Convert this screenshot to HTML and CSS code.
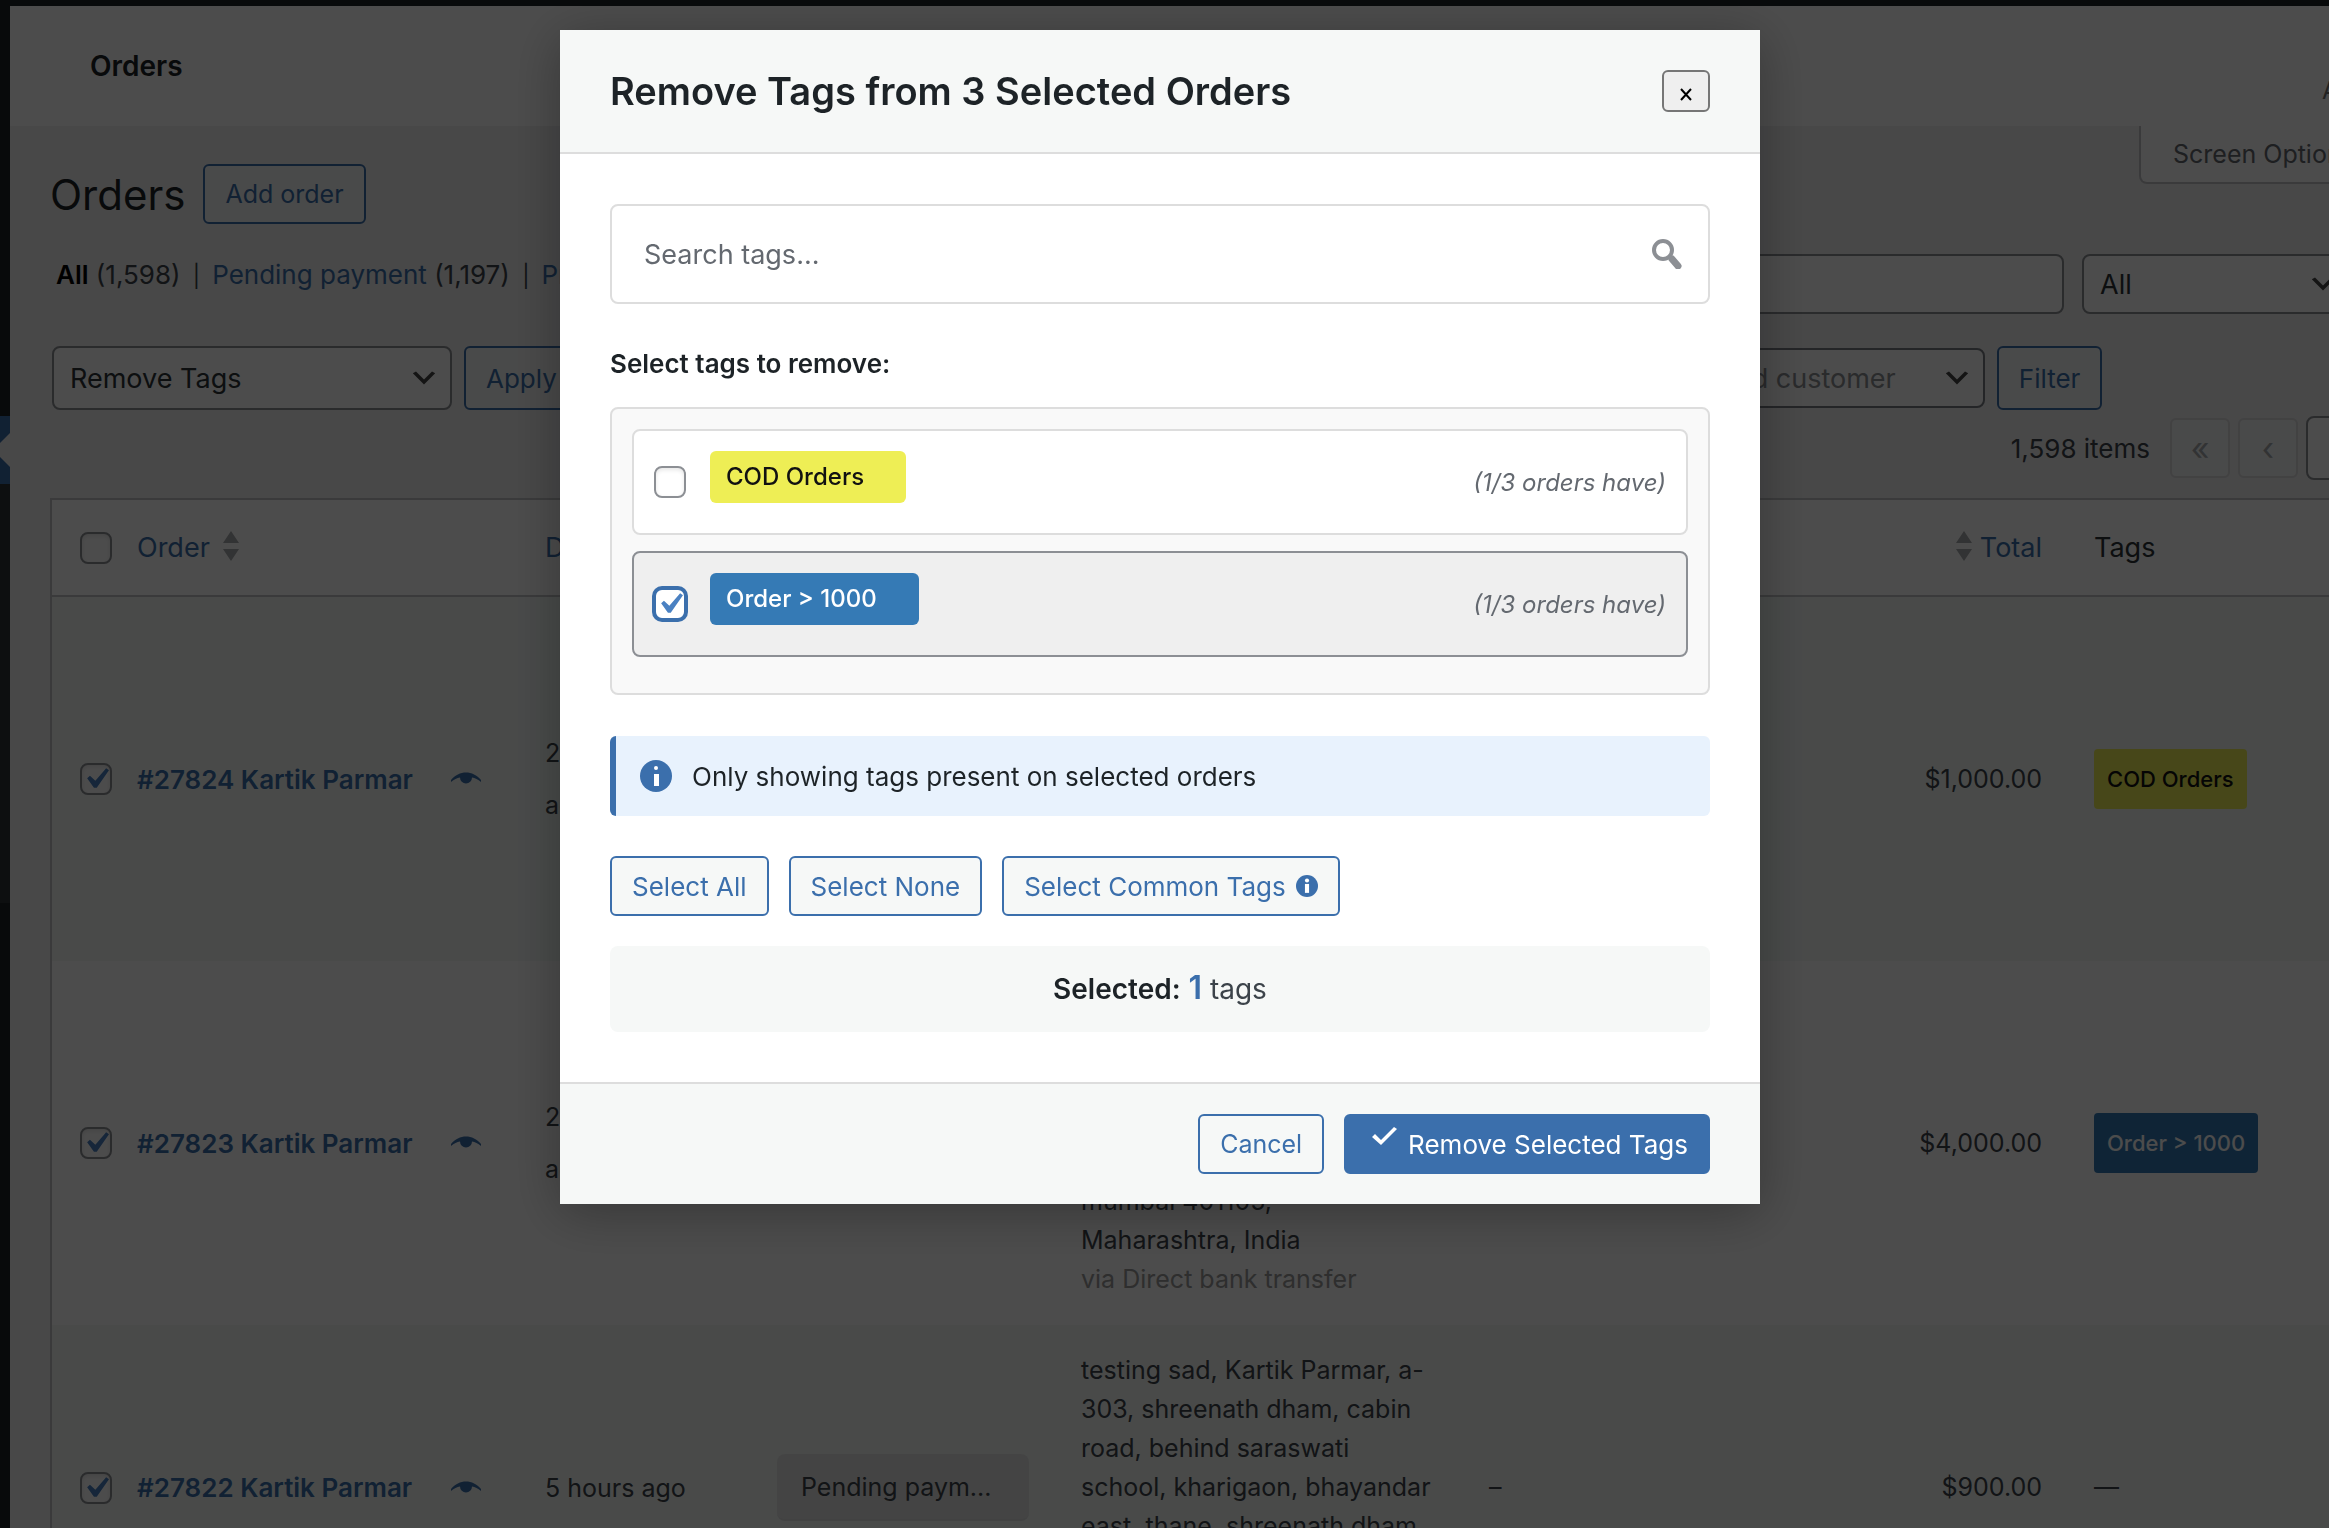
FILE: index.html
```html
<!DOCTYPE html>
<html lang="en">
<head>
    <meta charset="UTF-8">
    <meta name="viewport" content="width=device-width, initial-scale=1.0">
    <title>Orders</title>
    <link rel="stylesheet" href="styles.css">
</head>
<body>
    <div class="admin-bar"></div>
    <div class="admin">
        <nav class="admin-menu" aria-label="Main menu">
            <div class="menu-items"></div>
            <div class="menu-current"></div>
            <div class="menu-sub"></div>
            <div class="menu-items"></div>
        </nav>

        <main class="content">
            <header class="wc-header">
                <strong>Orders</strong>
                <a href="#" class="activity">Activity</a>
            </header>

            <div class="wrap">
                <button type="button" class="screen-options">Screen Options</button>

                <div class="title-row">
                    <h1>Orders</h1>
                    <button type="button" class="button">Add order</button>
                </div>

                <div class="search-row">
                    <ul class="views">
                        <li><a href="#" class="current">All</a> (1,598) <span class="sep">|</span></li>
                        <li><a href="#">Pending payment</a> (1,197) <span class="sep">|</span></li>
                        <li><a href="#">Processing</a> (266)</li>
                    </ul>
                    <div class="search-box">
                        <input type="search" aria-label="Search orders">
                        <select aria-label="Search in">
                            <option>All</option>
                        </select>
                    </div>
                </div>

                <div class="filter-row">
                    <select class="bulk" aria-label="Bulk actions">
                        <option>Remove Tags</option>
                    </select>
                    <button type="button" class="button tall">Apply</button>
                    <select class="dates" aria-label="Date">
                        <option>All dates</option>
                    </select>
                    <select class="dates" aria-label="Tag">
                        <option>All tags</option>
                    </select>
                    <select class="customer" aria-label="Customer">
                        <option>Filter by registered customer</option>
                    </select>
                    <button type="button" class="button tall">Filter</button>
                </div>

                <div class="pages">
                    <span class="count">1,598 items</span>
                    <button type="button" class="page-btn" disabled>«</button>
                    <button type="button" class="page-btn" disabled>‹</button>
                    <input type="text" aria-label="Current page">
                </div>

                <table class="orders">
                    <colgroup>
                        <col class="col-check">
                        <col class="col-order">
                        <col class="col-date">
                        <col class="col-status">
                        <col class="col-billing">
                        <col class="col-ship">
                        <col class="col-total">
                        <col>
                    </colgroup>
                    <thead>
                        <tr>
                            <th class="check"><input type="checkbox" aria-label="Select all"></th>
                            <th><a href="#">Order <svg class="sort after" viewBox="0 0 16 30"><path d="M8 0l8 12H0zM0 18h16L8 30z"/></svg></a></th>
                            <th><a href="#">Date</a></th>
                            <th>Status</th>
                            <th>Billing</th>
                            <th>Ship to</th>
                            <th class="total"><a href="#"><svg class="sort" viewBox="0 0 16 30"><path d="M8 0l8 12H0zM0 18h16L8 30z"/></svg> Total</a></th>
                            <th>Tags</th>
                        </tr>
                    </thead>
                    <tbody>
                        <tr>
                            <td class="check"><input type="checkbox" aria-label="Select order 27824" checked></td>
                            <td>
                                <div class="order-cell">
                                    <a href="#">#27824 Kartik Parmar</a>
                                    <svg class="eye" viewBox="0 0 30 14"><path d="M0 8C8-2 22-2 30 8v2c-3-2.500-6-4-9-4.500a6 6 0 1 1-12 0C6 6 3 7.500 0 10z"/></svg>
                                </div>
                            </td>
                            <td class="date">22 minutes<br>ago</td>
                            <td><span class="status">Pending paym...</span></td>
                            <td>testing sad, Kartik Parmar, a-303, shreenath dham, cabin road, behind saraswati school, kharigaon, bhayandar east, thane,<br>mumbai 401105,<br>Maharashtra, India <span class="via">via Direct bank transfer</span></td>
                            <td>–</td>
                            <td class="total">$1,000.00</td>
                            <td><span class="chip yellow">COD Orders</span></td>
                        </tr>
                        <tr>
                            <td class="check"><input type="checkbox" aria-label="Select order 27823" checked></td>
                            <td>
                                <div class="order-cell">
                                    <a href="#">#27823 Kartik Parmar</a>
                                    <svg class="eye" viewBox="0 0 30 14"><path d="M0 8C8-2 22-2 30 8v2c-3-2.500-6-4-9-4.500a6 6 0 1 1-12 0C6 6 3 7.500 0 10z"/></svg>
                                </div>
                            </td>
                            <td class="date">25 minutes<br>ago</td>
                            <td><span class="status">Pending paym...</span></td>
                            <td>testing sad, Kartik Parmar, a-303, shreenath dham, cabin road, behind saraswati school, kharigaon, bhayandar east, thane,<br>mumbai 401105,<br>Maharashtra, India <span class="via">via Direct bank transfer</span></td>
                            <td>–</td>
                            <td class="total">$4,000.00</td>
                            <td><span class="chip blue">Order &gt; 1000</span></td>
                        </tr>
                        <tr>
                            <td class="check"><input type="checkbox" aria-label="Select order 27822" checked></td>
                            <td>
                                <div class="order-cell">
                                    <a href="#">#27822 Kartik Parmar</a>
                                    <svg class="eye" viewBox="0 0 30 14"><path d="M0 8C8-2 22-2 30 8v2c-3-2.500-6-4-9-4.500a6 6 0 1 1-12 0C6 6 3 7.500 0 10z"/></svg>
                                </div>
                            </td>
                            <td class="date">5 hours ago</td>
                            <td><span class="status">Pending paym...</span></td>
                            <td>testing sad, Kartik Parmar, a-303, shreenath dham, cabin road, behind saraswati school, kharigaon, bhayandar east, thane, shreenath dham, mumbai 401105, Maharashtra, India</td>
                            <td>–</td>
                            <td class="total">$900.00</td>
                            <td>—</td>
                        </tr>
                    </tbody>
                </table>
            </div>
        </main>
    </div>

    <div class="overlay">
        <div class="modal" role="dialog" aria-labelledby="modalTitle">
            <header class="modal-header">
                <h2 id="modalTitle">Remove Tags from 3 Selected Orders</h2>
                <button type="button" class="close-btn" aria-label="Close">
                    <svg viewBox="0 0 14 14"><path d="M2 1l10 11M12 1L2 12"/></svg>
                </button>
            </header>

            <div class="modal-body">
                <div class="tag-search">
                    <input type="text" placeholder="Search tags..." aria-label="Search tags">
                    <svg viewBox="0 0 30 30"><circle cx="11" cy="11" r="9"/><path d="M20 20l6 7"/></svg>
                </div>

                <h3>Select tags to remove:</h3>
                <div class="tag-list">
                    <label class="tag-item">
                        <input type="checkbox">
                        <span class="tag yellow">COD Orders</span>
                        <em>(1/3 orders have)</em>
                    </label>
                    <label class="tag-item selected">
                        <input type="checkbox" class="focused" checked>
                        <span class="tag blue">Order &gt; 1000</span>
                        <em>(1/3 orders have)</em>
                    </label>
                </div>

                <div class="notice">
                    <svg viewBox="0 0 32 32"><circle cx="16" cy="16" r="16"/><circle class="dot" cx="16" cy="8" r="2"/><path class="dot" d="M14 14h5v12h-5z"/></svg>
                    Only showing tags present on selected orders
                </div>

                <div class="quick-actions">
                    <button type="button" class="button">Select All</button>
                    <button type="button" class="button">Select None</button>
                    <button type="button" class="button common">Select Common Tags
                        <svg viewBox="0 0 32 32"><circle cx="16" cy="16" r="16"/><circle class="dot" cx="16" cy="8" r="3"/><path class="dot" d="M13 13h6v13h-6z"/></svg>
                    </button>
                </div>

                <p class="selected-count"><strong>Selected:</strong> <b>1</b> tags</p>
            </div>

            <footer class="modal-footer">
                <button type="button" class="button">Cancel</button>
                <button type="button" class="button primary">
                    <svg viewBox="0 0 26 20"><path d="M0 10l3-3 6 6L22 0l3 2L9 18z"/></svg>
                    Remove Selected Tags
                </button>
            </footer>
        </div>
    </div>
</body>
</html>
```

FILE: styles.css
```css
* {
    margin: 0;
    padding: 0;
    box-sizing: border-box;
}

body {
    height: 100vh;
    overflow: hidden;
    display: flex;
    flex-direction: column;
    font-family: Inter, "Liberation Sans", sans-serif;
    font-size: 26px;
    line-height: 39px;
    color: #3c434a;
    background: #f0f0f1;
}

a {
    color: #3b6fac;
    text-decoration: none;
}

button,
input,
select {
    font-family: inherit;
    font-size: 26px;
}

/* Admin frame */
.admin-bar {
    flex: none;
    height: 6px;
    background: #1d2327;
}

.admin {
    flex: 1;
    min-height: 0;
    display: flex;
    overflow: hidden;
}

.admin-menu {
    flex: none;
    width: 10px;
    display: grid;
    grid-template-rows: 410px 68px 419px 1fr;
    overflow: hidden;
    background: #1d2327;
}

.menu-current {
    position: relative;
    background: #3b6fac;
}

.menu-current::after {
    content: "";
    position: absolute;
    right: 0;
    top: 17px;
    border: 17px solid transparent;
    border-right-color: #f0f0f1;
}

.menu-sub {
    background: #2c3338;
}

.content {
    flex: none;
    width: calc(100% + 80px);
}

.wc-header {
    display: flex;
    justify-content: space-between;
    align-items: center;
    height: 120px;
    padding: 0 0 0 80px;
    background: #fff;
}

.wc-header strong {
    font-size: 28px;
    font-weight: 600;
    color: #1d2327;
}

.activity {
    width: 97px;
    padding-top: 48px;
    height: 120px;
    font-size: 24px;
    line-height: 74px;
    color: #757575;
}

.wrap {
    position: relative;
    padding: 38px 68px 0 40px;
}

.screen-options {
    position: absolute;
    top: 0;
    right: 68px;
    width: 212px;
    height: 58px;
    padding: 0 0 0 32px;
    border: 2px solid #c3c4c7;
    border-top: none;
    border-radius: 0 0 8px 8px;
    background: #fff;
    color: #646970;
    font-size: 25px;
    text-align: left;
    white-space: nowrap;
}

.button {
    height: 60px;
    padding: 0 20px;
    border: 2px solid #3b6fac;
    border-radius: 6px;
    background: #f6f8f7;
    color: #3b6fac;
    white-space: nowrap;
}

.button.tall {
    height: 64px;
}

.title-row {
    display: flex;
    align-items: center;
    gap: 18px;
}

.title-row h1 {
    font-size: 42px;
    font-weight: 400;
    color: #1d2327;
}

.title-row .button {
    font-size: 25px;
}

select,
.search-box input,
.pages input {
    height: 60px;
    border: 2px solid #8c8f94;
    border-radius: 8px;
    background: #fff;
    color: #2c3338;
    font-size: 27px;
}

select {
    appearance: none;
    padding: 0 48px 0 16px;
    background: #fff url("data:image/svg+xml,%3Csvg xmlns='http://www.w3.org/2000/svg' viewBox='0 0 20 20'%3E%3Cpath d='M5 6l5 5 5-5 2 1-7 7-7-7 2-1z' fill='%23444'/%3E%3C/svg%3E") no-repeat right 10px center / 32px;
}

.search-row {
    display: flex;
    justify-content: space-between;
    margin-top: 30px;
}

.views {
    display: flex;
    gap: 12px;
    padding-left: 6px;
    list-style: none;
    line-height: 42px;
    white-space: nowrap;
}

.views .current {
    font-weight: 600;
    color: #000;
}

.sep {
    margin-left: 5px;
    font-size: 22px;
}

.search-box {
    display: flex;
    gap: 18px;
}

.search-box input {
    width: 500px;
}

.search-box select {
    width: 269px;
}

.filter-row {
    display: flex;
    gap: 12px;
    align-items: center;
    margin-top: 32px;
    padding-left: 2px;
}

.bulk {
    width: 400px;
    height: 64px;
}

.dates {
    width: 435px;
}

.customer {
    width: 500px;
    padding-left: 42px;
    border-color: #787c82;
    color: #8c8f94;
}

.pages {
    display: flex;
    justify-content: flex-end;
    align-items: center;
    gap: 8px;
    margin-top: 6px;
}

.count {
    margin-right: 12px;
}

.page-btn {
    width: 60px;
    height: 60px;
    border: 2px solid #dcdcde;
    border-radius: 6px;
    background: #f6f8f7;
    color: #a7aaad;
    font-size: 32px;
}

.pages input {
    width: 45px;
    height: 64px;
}

/* Orders table */
.orders {
    width: 100%;
    margin-top: 18px;
    table-layout: fixed;
    border: 2px solid #c3c4c7;
    border-spacing: 0;
    background: #fff;
}

.col-check { width: 59px; }
.col-order { width: 408px; }
.col-date { width: 232px; }
.col-status { width: 304px; }
.col-billing { width: 408px; }
.col-ship { width: 337px; }
.col-total { width: 268px; }

.orders th {
    height: 97px;
    padding: 0 26px;
    border-bottom: 2px solid #c3c4c7;
    font-size: 27px;
    font-weight: 400;
    text-align: left;
    color: #2c3338;
}

.orders td {
    padding: 26px;
    font-size: 25px;
    vertical-align: middle;
}

.orders tbody tr:nth-child(odd) {
    background: #f4f9f6;
}

.orders .check {
    padding: 0 0 0 28px;
}

.orders .total {
    text-align: right;
}

.order-cell {
    display: flex;
    justify-content: space-between;
    align-items: center;
    padding-right: 12px;
    font-size: 26px;
    font-weight: 600;
    white-space: nowrap;
}

.sort {
    width: 16px;
    height: 30px;
    vertical-align: -4px;
    fill: #a7aaad;
}

.sort.after {
    margin-left: 6px;
}

.eye {
    width: 30px;
    height: 14px;
    fill: #3b6fac;
}

.date {
    line-height: 52px;
    white-space: nowrap;
}

.status {
    display: block;
    height: 67px;
    padding: 0 24px;
    border-bottom: 2px solid #dcdcde;
    border-radius: 8px;
    background: #e5e5e5;
    line-height: 67px;
    white-space: nowrap;
}

.via {
    display: block;
    color: #999;
}

.chip {
    display: inline-block;
    padding: 0 13px;
    border-radius: 4px;
    font-size: 22px;
    font-weight: 500;
    line-height: 60px;
    white-space: nowrap;
}

.yellow {
    background: #eeee55;
    color: #111;
}

.blue {
    background: #357ab5;
    color: #fff;
}

input[type="checkbox"] {
    flex: none;
    appearance: none;
    display: block;
    width: 32px;
    height: 32px;
    border: 2px solid #8c8f94;
    border-radius: 8px;
    background-color: #fff;
    box-shadow: inset 0 2px 4px rgba(0,0,0,0.1);
}

input[type="checkbox"]:checked {
    background: #fff url("data:image/svg+xml,%3Csvg xmlns='http://www.w3.org/2000/svg' viewBox='0 0 20 20'%3E%3Cpath d='M14.830 4.890l1.340.940-5.810 8.380H9.020L5.780 9.670l1.340-1.250 2.570 2.400z' fill='%234a81c2'/%3E%3C/svg%3E") no-repeat center / 42px;
}

input[type="checkbox"].focused {
    border-color: #3b6fac;
    box-shadow: 0 0 0 2px #3b6fac;
}

/* Modal */
.overlay {
    position: fixed;
    inset: 0;
    z-index: 1000;
    display: flex;
    justify-content: center;
    align-items: flex-start;
    padding: 30px 9px 0 0;
    background: rgba(0,0,0,0.7);
}

.modal {
    width: 1200px;
    background: #fff;
    box-shadow: 0 8px 50px rgba(0,0,0,0.3);
}

.modal-header {
    display: flex;
    justify-content: space-between;
    align-items: center;
    padding: 40px 50px;
    border-bottom: 2px solid #ddd;
    background: #f6f8f7;
}

.modal-header h2 {
    font-size: 38px;
    font-weight: 600;
    line-height: 42px;
    color: #1d2327;
}

.close-btn {
    display: flex;
    justify-content: center;
    align-items: flex-end;
    width: 48px;
    height: 42px;
    padding-bottom: 8px;
    border: 2px solid #767676;
    border-radius: 6px;
    background: #efefef;
}

.close-btn svg {
    width: 14px;
    height: 14px;
    stroke: #000;
    stroke-width: 2;
}

.modal-body {
    padding: 50px;
}

.tag-search {
    position: relative;
}

.tag-search input {
    display: block;
    width: 100%;
    height: 100px;
    padding: 0 80px 0 32px;
    border: 2px solid #ddd;
    border-radius: 8px;
    font-size: 27px;
}

.tag-search input::placeholder {
    color: #646970;
}

.tag-search svg {
    position: absolute;
    right: 28px;
    top: 35px;
    width: 30px;
    height: 30px;
    fill: none;
    stroke: #8c8f94;
    stroke-width: 4;
}

.tag-search path {
    stroke-width: 7;
    stroke-linecap: round;
}

.modal-body h3 {
    margin: 40px 0 24px;
    font-size: 26px;
    font-weight: 600;
    color: #1d2327;
}

.tag-list {
    padding: 20px;
    border: 2px solid #ddd;
    border-radius: 8px;
    background: #f9f9f9;
}

.tag-item {
    display: flex;
    align-items: center;
    margin-bottom: 16px;
    padding: 20px;
    border: 2px solid #ddd;
    border-radius: 8px;
    background: #fff;
}

.tag-item.selected {
    border-color: #8c8f94;
    background: #efefef;
}

.tag {
    margin: 0 auto 10px 24px;
    padding: 0 42px 0 16px;
    border-radius: 6px;
    font-size: 24px;
    font-weight: 500;
    line-height: 52px;
}

.tag-item em {
    font-size: 24px;
    color: #646970;
}

.notice {
    display: flex;
    align-items: center;
    gap: 20px;
    height: 80px;
    margin: 41px 0 40px;
    padding-left: 24px;
    border-left: 6px solid #3b6fac;
    border-radius: 6px;
    background: #e8f2fd;
    color: #1d2327;
}

.notice svg {
    width: 32px;
    height: 32px;
    fill: #3b6fac;
}

.modal .dot {
    fill: #fff;
}

.quick-actions {
    display: flex;
    gap: 20px;
    margin-bottom: 30px;
}

.common {
    display: flex;
    align-items: center;
    gap: 10px;
}

.common svg {
    width: 22px;
    height: 22px;
    fill: #3b6fac;
}

.selected-count {
    padding: 22px;
    border-radius: 8px;
    background: #f6f8f7;
    font-size: 28px;
    line-height: 42px;
    text-align: center;
}

.selected-count strong {
    font-weight: 600;
    color: #1d2327;
}

.selected-count b {
    font-size: 32px;
    font-weight: 600;
    line-height: 32px;
    color: #3b6fac;
}

.modal-footer {
    display: flex;
    justify-content: flex-end;
    gap: 20px;
    padding: 30px 50px;
    border-top: 2px solid #ddd;
    background: #f6f8f7;
}

.modal-footer .button {
    font-size: 25px;
}

.modal-footer .primary {
    display: flex;
    align-items: center;
    gap: 10px;
    padding-left: 26px;
    background: #3b6fac;
    color: #fff;
    font-size: 26px;
}

.primary svg {
    width: 26px;
    height: 20px;
    margin-bottom: 14px;
    fill: #fff;
}
```
